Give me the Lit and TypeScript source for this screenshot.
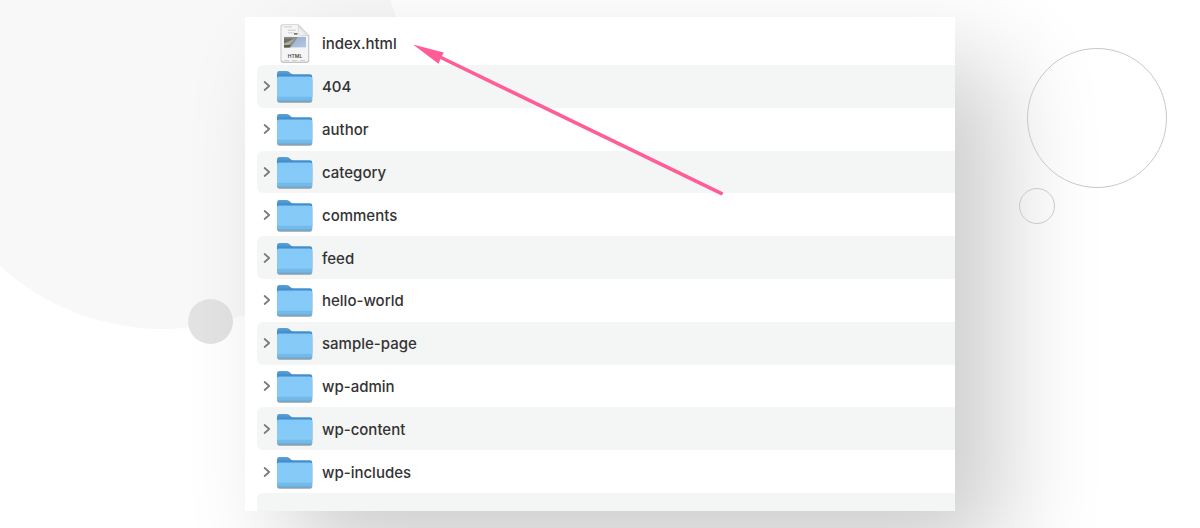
import { LitElement, html, svg, css } from "lit";
import { customElement, property } from "lit/decorators.js";

const folders = [
  "404",
  "author",
  "category",
  "comments",
  "feed",
  "hello-world",
  "sample-page",
  "wp-admin",
  "wp-content",
  "wp-includes",
];

@customElement("folder-row")
class FolderRow extends LitElement {
  @property() name = "";

  static styles = css`
    :host {
      display: flex;
      align-items: center;
      min-width: 0;
    }
    .toggle {
      display: flex;
      align-items: center;
      justify-content: flex-end;
      width: 20px;
      height: 32px;
      padding: 0 6px 0 0;
      border: 0;
      background: none;
      cursor: pointer;
    }
    .icon {
      flex: none;
      display: block;
      margin-right: 9px;
    }
    .name {
      padding-top: 2px;
    }
  `;

  render() {
    return html`
      <button class="toggle" aria-label="Expand ${this.name}">
        <svg width="8" height="12" viewBox="0 0 8 12" fill="none" stroke="#7a7a7a" stroke-width="1.7" stroke-linecap="round" stroke-linejoin="round">
          <path d="M1.6 2 6.2 6 1.6 10" />
        </svg>
      </button>
      <svg class="icon" width="36" height="34" viewBox="0 0 36 34" aria-hidden="true">
        <defs>
          <linearGradient id="front" x1="0" y1="0" x2="0" y2="1">
            <stop offset="0" stop-color="#84c9f7" />
            <stop offset="0.78" stop-color="#86cbf8" />
            <stop offset="0.84" stop-color="#72b9e9" />
            <stop offset="0.9" stop-color="#76bcea" />
            <stop offset="1" stop-color="#5ea9da" />
          </linearGradient>
          <linearGradient id="back" x1="0" y1="0" x2="0" y2="1">
            <stop offset="0" stop-color="#5ba4d8" />
            <stop offset="0.17" stop-color="#438ecb" />
            <stop offset="0.25" stop-color="#377dc4" />
          </linearGradient>
        </defs>
        <rect x="0.2" y="9" width="35" height="24.8" rx="2.4" fill="#6b7680" opacity="0.7" />
        <path d="M0 4.4Q0 2 2.4 2H9.8C12.4 2 13.4 5.2 16 5.2H32.9Q35.2 5.2 35.2 7.6V28H0Z" fill="url(#back)" />
        <path d="M0 9.2Q0 7.6 1.8 7.6H33.4Q35.2 7.6 35.2 9.2V30.4Q35.2 32.6 33 32.6H2.2Q0 32.6 0 30.4Z" fill="url(#front)" />
      </svg>
      <span class="name">${this.name}</span>
    `;
  }
}

@customElement("app-root")
class AppRoot extends LitElement {
  static styles = css`
    :host {
      display: block;
      font-family: Inter, "Liberation Sans", sans-serif;
      font-size: 15px;
      font-weight: 500;
      line-height: 20px;
      color: #333;
    }
    .page {
      position: relative;
      overflow: hidden;
      box-sizing: border-box;
      min-height: 100vh;
      padding: 17px;
      background: #fff;
    }
    .disc,
    .ring {
      position: absolute;
      box-sizing: border-box;
      border-radius: 50%;
    }
    .disc-large {
      left: -80px;
      top: -157px;
      width: 486px;
      height: 486px;
      background: #f8f8f8;
    }
    .disc-small {
      left: 188px;
      top: 299px;
      width: 45px;
      height: 45px;
      background: #e3e3e3;
    }
    .ring {
      border: 1px solid #c9c9c9;
    }
    .ring-large {
      right: 33px;
      top: 48px;
      width: 140px;
      height: 140px;
    }
    .ring-small {
      right: 145px;
      top: 188px;
      width: 36px;
      height: 36px;
    }
    .panel {
      position: relative;
      box-sizing: border-box;
      max-width: 710px;
      margin: 0 auto;
      padding: 5px 0 0 12px;
      background: #fff;
      box-shadow: 45px 45px 95px rgba(0, 0, 0, 0.2);
    }
    .file {
      display: flex;
      align-items: center;
      height: 43px;
      padding-left: 23px;
    }
    .file-icon {
      flex: none;
      display: block;
      margin-right: 12px;
    }
    .folders {
      display: grid;
      grid-auto-rows: 1fr;
      min-height: 428px;
      margin: 0;
      padding: 0;
      list-style: none;
    }
    .item {
      display: grid;
      border-radius: 6px 0 0 6px;
    }
    .item:nth-child(odd),
    .stub {
      background: #f4f5f5;
    }
    .stub {
      height: 18px;
      border-radius: 6px 0 0 0;
    }
    .arrow {
      position: absolute;
      left: 165px;
      top: 23px;
      pointer-events: none;
    }
  `;

  render() {
    return html`
      <main class="page">
        <div class="disc disc-large"></div>
        <div class="disc disc-small"></div>
        <section class="panel" aria-label="Files">
          <div class="file">
            ${this.fileIcon()}
            <span>index.html</span>
          </div>
          <ul class="folders">
            ${folders.map((name) => html`<li class="item"><folder-row .name=${name}></folder-row></li>`)}
          </ul>
          <div class="stub"></div>
          <svg class="arrow" width="320" height="160" viewBox="0 0 320 160" aria-hidden="true">
            <path d="M32 18 311.2 153.3" stroke="#ff5c98" stroke-width="3.6" stroke-linecap="round" />
            <path d="M3 4.5 33.7 12.4 31 18 28.5 23.8Z" fill="#ff5c98" />
          </svg>
        </section>
        <div class="ring ring-large"></div>
        <div class="ring ring-small"></div>
      </main>
    `;
  }

  private fileIcon() {
    return svg`
      <svg class="file-icon" width="30" height="40" viewBox="0 0 30 40" aria-hidden="true">
        <defs>
          <linearGradient id="sky" x1="0" y1="0" x2="1" y2="1">
            <stop offset="0" stop-color="#8fa9c9" />
            <stop offset="1" stop-color="#b4c9e2" />
          </linearGradient>
          <linearGradient id="fold" x1="0" y1="1" x2="1" y2="0">
            <stop offset="0" stop-color="#ffffff" />
            <stop offset="0.5" stop-color="#e2e2e2" />
          </linearGradient>
        </defs>
        <path d="M3 0.6H18.5L29.2 11.6V36Q29.2 38.7 26.5 38.7H3.2Q0.6 38.7 0.6 36V3Q0.6 0.6 3 0.6Z" fill="#b3b3b3" />
        <path d="M3.4 1.1H18.3L28.4 11.5V35.5Q28.4 37.7 26.3 37.7H3.4Q1.3 37.7 1.3 35.5V3.1Q1.3 1.1 3.4 1.1Z" fill="#f5f5f5" />
        <path d="M4 2.8H12M8 6.2H16M8 8.8H14" stroke="#c2c2c2" stroke-width="0.8" />
        <path d="M14 9.2H17.5V10.6H14Z" fill="#555" />
        <rect x="4" y="12.9" width="22" height="10.5" fill="url(#sky)" />
        <path d="M4 12.9H18L10.5 23.4H4Z" fill="#8f9189" />
        <path d="M4 14.6H13L6 19.6H4Z" fill="#697372" />
        <path d="M4 19.6 15 15.1 8 21.6H4Z" fill="#b5ad94" />
        <path d="M4 21.1H11L9.5 23.4H4Z" fill="#5c5f50" />
        <path d="M18.4 1.1V9Q18.4 11.5 21 11.5H28.6Z" fill="url(#fold)" stroke="#c9c9c9" stroke-width="0.6" />
        <text x="15" y="34" text-anchor="middle" font-size="5" font-weight="600" font-family="Inter, sans-serif" fill="#4a4a4a">HTML</text>
        <path d="M4 36.5H9M12 36.5H17M20 36.5H25" stroke="#cfcfcf" stroke-width="1" />
      </svg>
    `;
  }
}
